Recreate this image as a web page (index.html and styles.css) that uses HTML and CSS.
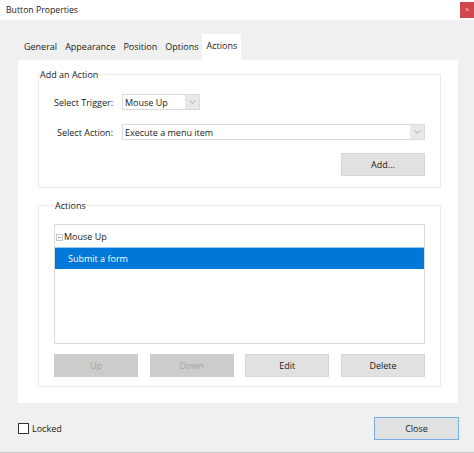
FILE: index.html
```html
<!DOCTYPE html>
<html lang="en">
<head>
  <meta charset="UTF-8" />
  <title>Button Properties</title>
  <link rel="stylesheet" href="styles.css">
</head>
<body>
  <div class="dialog">
    <div class="titlebar">
      <span class="title">Button Properties</span>
      <button class="close-x">&#215;</button>
    </div>

    <div class="content">
      <div class="tabs">
        <div class="tab">General</div>
        <div class="tab">Appearance</div>
        <div class="tab">Position</div>
        <div class="tab">Options</div>
        <div class="tab active">Actions</div>
      </div>

      <div class="tab-panel">
        <fieldset class="group add-group">
          <legend>Add an Action</legend>
          <div class="form-grid">
            <label>Select Trigger:</label>
            <div class="dropdown trigger">
              <span>Mouse Up</span>
              <span class="arrow">
                <svg width="7" height="4" viewBox="0 0 7 4"><path d="M0.5 0.5 L3.5 3.2 L6.5 0.5" fill="none" stroke="#a0a0a0" stroke-width="0.9"/></svg>
              </span>
            </div>
            <label>Select Action:</label>
            <div class="dropdown action">
              <span>Execute a menu item</span>
              <span class="arrow">
                <svg width="7" height="4" viewBox="0 0 7 4"><path d="M0.5 0.5 L3.5 3.2 L6.5 0.5" fill="none" stroke="#a0a0a0" stroke-width="0.9"/></svg>
              </span>
            </div>
          </div>
          <div class="add-row">
            <button class="btn">Add...</button>
          </div>
        </fieldset>

        <fieldset class="group actions-group">
          <legend>Actions</legend>
          <div class="action-list">
            <div class="list-row parent"><span class="collapse"></span>Mouse Up</div>
            <div class="list-row selected">Submit a form</div>
          </div>
          <div class="btn-row">
            <button class="btn" disabled>Up</button>
            <button class="btn" disabled>Down</button>
            <button class="btn">Edit</button>
            <button class="btn">Delete</button>
          </div>
        </fieldset>
      </div>

      <div class="footer">
        <label class="check"><span class="box"></span>Locked</label>
        <button class="btn close-btn">Close</button>
      </div>
    </div>
  </div>
</body>
</html>
```

FILE: styles.css
```css
body {
  margin: 0;
  font-family: "Open Sans", "Noto Sans", sans-serif;
  font-size: 9px;
  color: #1a1a1a;
  background: #f0f0f0;
}

.dialog {
  width: 474px;
  height: 453px;
  display: flex;
  flex-direction: column;
  box-sizing: border-box;
  border-bottom: 1px solid #c8c8c8;
}

.titlebar {
  height: 20px;
  background: #fff;
  display: flex;
  justify-content: space-between;
  align-items: flex-start;
}

.title {
  padding: 4px 0 0 6px;
  font-size: 8.7px;
}

.close-x {
  width: 14px;
  height: 16px;
  margin-top: 2px;
  border: none;
  padding: 0;
  background: #d2474b;
  color: #f4d0d0;
  font-size: 7px;
  line-height: 16px;
}

.content {
  flex: 1;
  padding: 14px 16px 0 18px;
  display: flex;
  flex-direction: column;
}

.tabs {
  display: flex;
  align-items: flex-end;
  height: 26px;
  padding-left: 2px;
}

.tab {
  padding: 0 4px;
  height: 23px;
  line-height: 19px;
}

.tab.active {
  background: #fff;
  height: 26px;
  line-height: 23px;
}

.tab-panel {
  background: #fff;
  height: 343px;
  box-sizing: border-box;
  padding: 8px 17px 0 20px;
  display: flex;
  flex-direction: column;
  gap: 11px;
}

.group {
  margin: 0;
  border: 1px solid #ececec;
  padding: 0;
}

.group legend {
  padding: 0;
  margin-left: 1px;
}

.add-group {
  height: 120px;
  box-sizing: border-box;
  padding: 13px 15px 0 0;
}

.form-grid {
  display: grid;
  grid-template-columns: 74px 1fr;
  column-gap: 9px;
  row-gap: 14px;
  align-items: center;
}

.form-grid label {
  text-align: right;
}

.dropdown {
  height: 16px;
  box-sizing: border-box;
  border: 1px solid #dadada;
  display: flex;
  align-items: center;
  justify-content: space-between;
  padding-left: 2px;
}

.dropdown.trigger {
  width: 78px;
}

.arrow {
  width: 14px;
  height: 14px;
  background: #e8e8e8;
  display: flex;
  align-items: center;
  justify-content: center;
}

.add-row {
  display: flex;
  justify-content: flex-end;
  margin-top: 13px;
}

.btn {
  width: 84px;
  height: 23px;
  font: inherit;
  color: #1a1a1a;
  background: #e1e1e1;
  border: 1px solid #d6d6d6;
  padding: 0;
}

.btn:disabled {
  background: #cccccc;
  border-color: #cccccc;
  color: #a3a3a3;
}

.actions-group {
  height: 188px;
  box-sizing: border-box;
  padding: 12px 15px 0 15px;
}

.action-list {
  height: 120px;
  box-sizing: border-box;
  border: 1px solid #d9d9d9;
  padding-top: 2px;
}

.list-row {
  height: 20px;
  line-height: 20px;
  display: flex;
  align-items: center;
}

.list-row.selected {
  height: 22px;
  background: #0078d7;
  color: #fff;
  padding-left: 13px;
  border-top: 1px solid #99c9ef;
  box-sizing: border-box;
}

.collapse {
  position: relative;
  width: 5px;
  height: 5px;
  border: 1px solid #c8c8c8;
  margin: 0 1px;
}

.collapse::after {
  content: "";
  position: absolute;
  left: 1px;
  top: 2px;
  width: 3px;
  height: 1px;
  background: #a0a0a0;
}

.btn-row {
  display: flex;
  justify-content: space-between;
  margin-top: 10px;
}

.footer {
  display: flex;
  justify-content: space-between;
  align-items: center;
  padding: 14px 0 0 0;
}

.check {
  display: flex;
  align-items: center;
  gap: 3px;
}

.box {
  width: 9px;
  height: 9px;
  border: 1px solid #333;
  background: #fff;
}

.close-btn {
  width: 85px;
  height: 23px;
  margin-right: -1px;
  border: 1px solid #7aaee0;
}
```
